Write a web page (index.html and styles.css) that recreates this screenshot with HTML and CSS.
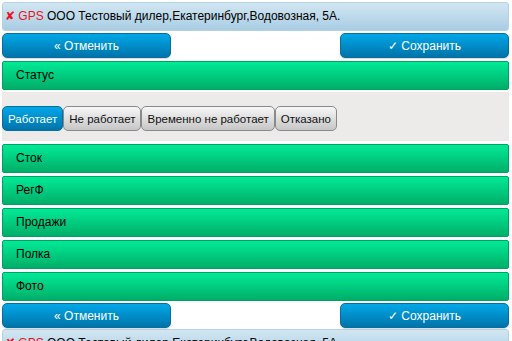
FILE: index.html
```html
<!DOCTYPE html>
<html lang="ru">
<head>
  <meta charset="UTF-8">
  <meta name="viewport" content="width=device-width, initial-scale=1">
  <title>Статус дилера</title>
  <link rel="stylesheet" href="styles.css">
</head>
<body>

  <div class="title-bar">
    <span class="gps">&#x2718; GPS</span> ООО Тестовый дилер,Екатеринбург,Водовозная, 5А.
  </div>

  <div class="actions">
    <button class="btn-blue">&laquo; Отменить</button>
    <button class="btn-blue">&#x2713; Сохранить</button>
  </div>

  <div class="section">Статус</div>

  <div class="choice">
    <button class="seg active">Работает</button><button class="seg">Не работает</button><button class="seg">Временно не работает</button><button class="seg">Отказано</button>
  </div>

  <div class="section">Сток</div>
  <div class="section">РегФ</div>
  <div class="section">Продажи</div>
  <div class="section">Полка</div>
  <div class="section">Фото</div>

  <div class="actions">
    <button class="btn-blue">&laquo; Отменить</button>
    <button class="btn-blue">&#x2713; Сохранить</button>
  </div>

  <div class="title-bar">
    <span class="gps">&#x2718; GPS</span> ООО Тестовый дилер,Екатеринбург,Водовозная, 5А.
  </div>

</body>
</html>
```

FILE: styles.css
```css
body {
  margin: 0;
  padding: 2px 3px 0 2px;
  font-family: "Liberation Sans", Arial, sans-serif;
  font-size: 12px;
  color: #000;
  background-color: #fff;
}
.title-bar {
  height: 29px;
  box-sizing: border-box;
  margin-top: 1px;
  padding: 0 2px;
  line-height: 27px;
  border: 1px solid #b3d2e4;
  border-radius: 3px;
  background: linear-gradient(#d2e6f2, #a9cde3);
  white-space: nowrap;
  overflow: hidden;
}
.title-bar:first-child {
  margin-top: 0;
}
.gps {
  color: #e8141c;
}
.actions {
  display: flex;
  justify-content: space-between;
  margin-top: 2px;
}
.btn-blue {
  width: 169px;
  height: 25px;
  border: 1px solid #0a6d9c;
  border-radius: 5px;
  background: linear-gradient(#00a8e8, #0073aa);
  color: #fff;
  font-family: inherit;
  font-size: 12px;
  padding: 0;
  box-shadow: 0 1px 1px rgba(0,0,0,0.15);
}
.section {
  height: 29px;
  box-sizing: border-box;
  margin-top: 3px;
  padding-left: 13px;
  line-height: 27px;
  border: 1px solid #00a263;
  border-radius: 2px;
  background: linear-gradient(#00ea96, #00ae68);
}
.choice {
  display: flex;
  margin-top: 2px;
  margin-bottom: 1px;
  padding: 14px 0 10px 0;
  background-color: #ecebe9;
}
.seg {
  height: 25px;
  padding: 0 5px;
  border: 1px solid #8a8a8a;
  border-radius: 5px;
  background: linear-gradient(#f7f7f7, #c6c6c6);
  font-family: inherit;
  font-size: 11.5px;
  color: #111;
}
.seg.active {
  border-color: #0a6d9c;
  background: linear-gradient(#00a8e8, #0073aa);
  color: #fff;
}
```
